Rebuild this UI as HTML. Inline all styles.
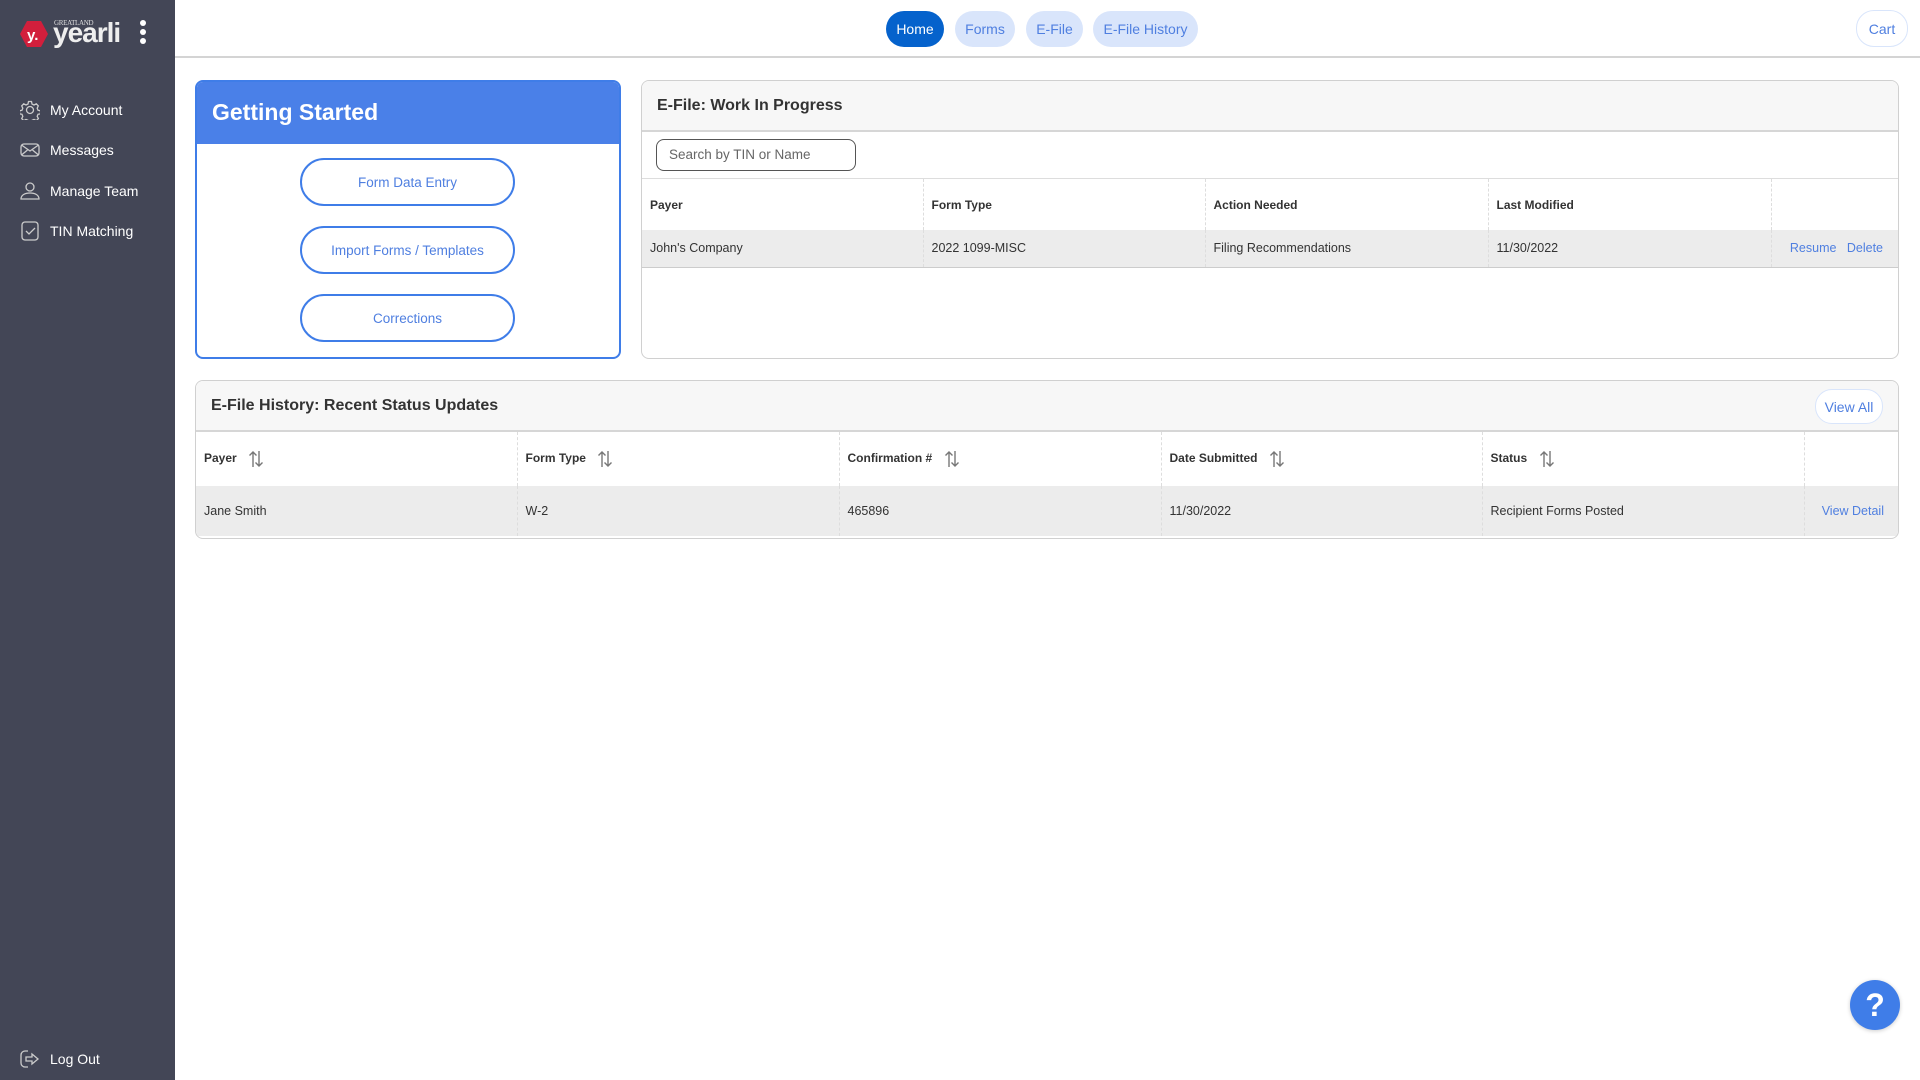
<!DOCTYPE html>
<html><head><meta charset="utf-8"><style>
*{box-sizing:border-box;margin:0;padding:0}
body{width:1920px;height:1080px;overflow:hidden;background:#fff;font-family:"Liberation Sans",Arial,sans-serif;position:relative}
.side{position:absolute;left:0;top:0;width:175px;height:1080px;background:#434656;color:#fff}
.nav{position:absolute;left:20px;font-size:14px;display:flex;align-items:center}
.nav svg{width:20px;height:20px;margin-right:10px}
.top{position:absolute;left:175px;top:0;right:0;height:58px;border-bottom:2px solid #d4d4d4}
.pill{position:absolute;top:11px;height:36px;border-radius:18px;background:#d9e5fb;color:#4f7fe0;font-size:14px;display:flex;align-items:center;justify-content:center}
.card{position:absolute;border:1.5px solid #d0d0d0;border-radius:8px;overflow:hidden;background:#fff}
.chead{background:#f7f7f7;border-bottom:2px solid #d6d6d6;font-weight:bold;font-size:16px;color:#333;display:flex;align-items:center;padding-left:15px}
.btn{position:absolute;left:103px;width:215px;height:48px;border:2px solid #3f7de8;border-radius:24px;color:#4f7fe0;font-size:13.5px;display:flex;align-items:center;justify-content:center}
table{border-collapse:collapse;width:100%;font-size:12.5px;color:#333}
td,th{text-align:left;padding-left:8px;border-right:1px dashed #ddd;font-weight:normal}
th{font-weight:bold;font-size:12px}
td:last-child,th:last-child{border-right:none}
.row td{background:#ececec}
.lnk{color:#4f7fe0}
.sort{display:inline-block;vertical-align:middle;margin-left:8px}
</style></head><body>
<div class="side">
  <svg style="position:absolute;left:19px;top:19px" width="30" height="30" viewBox="0 0 30 30"><polygon points="8,2 22,2 29,15 22,28 8,28 1,15" fill="#d21f3c"/><text x="8" y="21" font-family="Liberation Sans" font-weight="bold" font-size="15" fill="#fff">y.</text></svg>
  <div style="position:absolute;left:54px;top:19px;font-size:7px;color:#ddd;font-family:'Liberation Serif',serif;letter-spacing:-0.3px">GREATLAND</div>
  <div style="position:absolute;left:53px;top:17px;font-size:28px;font-weight:bold;color:#eee;letter-spacing:-1px">yearli</div>
  <div style="position:absolute;left:140px;top:20px;width:6px">
    <div style="width:6px;height:6px;border-radius:3px;background:#fff;margin-bottom:3px"></div>
    <div style="width:6px;height:6px;border-radius:3px;background:#fff;margin-bottom:3px"></div>
    <div style="width:6px;height:6px;border-radius:3px;background:#fff"></div></div>
  <div class="nav" style="top:100px"><svg viewBox="0 0 20 20" fill="none" stroke="#ccc" stroke-width="1.3"><circle cx="10" cy="10" r="3.5"/><path d="M8.5 1.5h3l.5 2.5 2 1 2.3-1.2 2 2.1-1.1 2.3.8 2 2.5.6v3l-2.5.5-.8 2 1.2 2.3-2.1 2-2.3-1.1-2 .8-.5 2.5h-3l-.5-2.5-2-.8-2.3 1.1-2-2 1.1-2.3-.8-2-2.5-.5v-3l2.5-.6.8-2-1.1-2.3 2-2.1 2.3 1.2 2-1z"/></svg>My Account</div>
  <div class="nav" style="top:140px"><svg viewBox="0 0 20 20" fill="none" stroke="#ccc" stroke-width="1.3"><rect x="1" y="4" width="18" height="12" rx="3"/><path d="M1.5 5l8.5 6 8.5-6M1.5 15l6-5M18.5 15l-6-5"/></svg>Messages</div>
  <div class="nav" style="top:181px"><svg viewBox="0 0 20 20" fill="none" stroke="#ccc" stroke-width="1.3"><circle cx="10" cy="6" r="4"/><path d="M1 18c0-4 4-6 9-6s9 2 9 6z"/></svg>Manage Team</div>
  <div class="nav" style="top:221px"><svg viewBox="0 0 20 20" fill="none" stroke="#ccc" stroke-width="1.3"><rect x="2" y="1" width="16" height="18" rx="3"/><path d="M6 10l3 3 6-6"/></svg>TIN Matching</div>
  <div class="nav" style="top:1049px"><svg viewBox="0 0 20 20" fill="none" stroke="#ccc" stroke-width="1.3"><path d="M8 2H5a4 4 0 0 0-4 4v8a4 4 0 0 0 4 4h3"/><path d="M6 8h6V5l6 5-6 5v-3H6z"/></svg>Log Out</div>
</div>
<div class="top">
  <div class="pill" style="left:711px;width:58px;background:#0562cc;color:#fff">Home</div>
  <div class="pill" style="left:780px;width:60px">Forms</div>
  <div class="pill" style="left:851px;width:57px">E-File</div>
  <div class="pill" style="left:918px;width:105px">E-File History</div>
  <div class="pill" style="left:1681px;width:52px;background:#fff;border:1.5px solid #d9e5fb;top:10px;height:37px">Cart</div>
</div>
<div class="card" style="left:195px;top:80px;width:426px;height:279px;border:2px solid #3f7de8">
  <div style="background:#4a80e8;height:62px;color:#fff;font-weight:bold;font-size:23px;padding:17px 0 0 15px">Getting Started</div>
  <div class="btn" style="top:76px">Form Data Entry</div>
  <div class="btn" style="top:144px">Import Forms / Templates</div>
  <div class="btn" style="top:212px">Corrections</div>
</div>
<div class="card" style="left:641px;top:80px;width:1258px;height:279px">
  <div class="chead" style="height:51px">E-File: Work In Progress</div>
  <div style="height:47px;position:relative;border-bottom:1.5px solid #ddd"><div style="position:absolute;left:14px;top:7px;width:200px;height:32px;border:1.5px solid #555;border-radius:8px;font-size:13.5px;color:#666;padding:7px 12px">Search by TIN or Name</div></div>
  <table><tr style="height:51px"><th style="width:281px">Payer</th><th style="width:282px">Form Type</th><th style="width:283px">Action Needed</th><th style="width:283px">Last Modified</th><th></th></tr>
  <tr class="row" style="height:37px;border-bottom:1.5px solid #ccc"><td>John's Company</td><td>2022 1099-MISC</td><td>Filing Recommendations</td><td>11/30/2022</td><td style="text-align:right;padding-right:15px"><span class="lnk">Resume</span>&nbsp;&nbsp;&nbsp;<span class="lnk">Delete</span></td></tr></table>
</div>
<div class="card" style="left:195px;top:380px;width:1704px;height:159px">
  <div class="chead" style="height:51px;position:relative">E-File History: Recent Status Updates
    <div style="position:absolute;right:15px;top:8px;width:68px;height:35px;border:1.5px solid #d9e5fb;border-radius:17px;background:#fff;color:#4f7fe0;font-weight:normal;font-size:14px;display:flex;align-items:center;justify-content:center">View All</div></div>
  <table><tr style="height:54px">
  <th style="width:321px">Payer <svg class="sort" width="16" height="18" viewBox="0 0 16 18" fill="none" stroke="#777" stroke-width="1.4"><path d="M5 17V2M1.5 5.5L5 2l3.5 3.5M11 1v15M7.5 12.5L11 16l3.5-3.5"/></svg></th>
  <th style="width:322px">Form Type <svg class="sort" width="16" height="18" viewBox="0 0 16 18" fill="none" stroke="#777" stroke-width="1.4"><path d="M5 17V2M1.5 5.5L5 2l3.5 3.5M11 1v15M7.5 12.5L11 16l3.5-3.5"/></svg></th>
  <th style="width:322px">Confirmation # <svg class="sort" width="16" height="18" viewBox="0 0 16 18" fill="none" stroke="#777" stroke-width="1.4"><path d="M5 17V2M1.5 5.5L5 2l3.5 3.5M11 1v15M7.5 12.5L11 16l3.5-3.5"/></svg></th>
  <th style="width:321px">Date Submitted <svg class="sort" width="16" height="18" viewBox="0 0 16 18" fill="none" stroke="#777" stroke-width="1.4"><path d="M5 17V2M1.5 5.5L5 2l3.5 3.5M11 1v15M7.5 12.5L11 16l3.5-3.5"/></svg></th>
  <th style="width:322px">Status <svg class="sort" width="16" height="18" viewBox="0 0 16 18" fill="none" stroke="#777" stroke-width="1.4"><path d="M5 17V2M1.5 5.5L5 2l3.5 3.5M11 1v15M7.5 12.5L11 16l3.5-3.5"/></svg></th><th></th></tr>
  <tr class="row" style="height:50px"><td>Jane Smith</td><td>W-2</td><td>465896</td><td>11/30/2022</td><td>Recipient Forms Posted</td><td style="text-align:right;padding-right:14px"><span class="lnk">View Detail</span></td></tr></table>
</div>
<div style="position:absolute;left:1850px;top:980px;width:50px;height:50px;border-radius:25px;background:#3f7de8;box-shadow:0 1px 4px rgba(0,0,0,.2);color:#fff;font-weight:bold;font-size:32px;display:flex;align-items:center;justify-content:center">?</div>
</body></html>
